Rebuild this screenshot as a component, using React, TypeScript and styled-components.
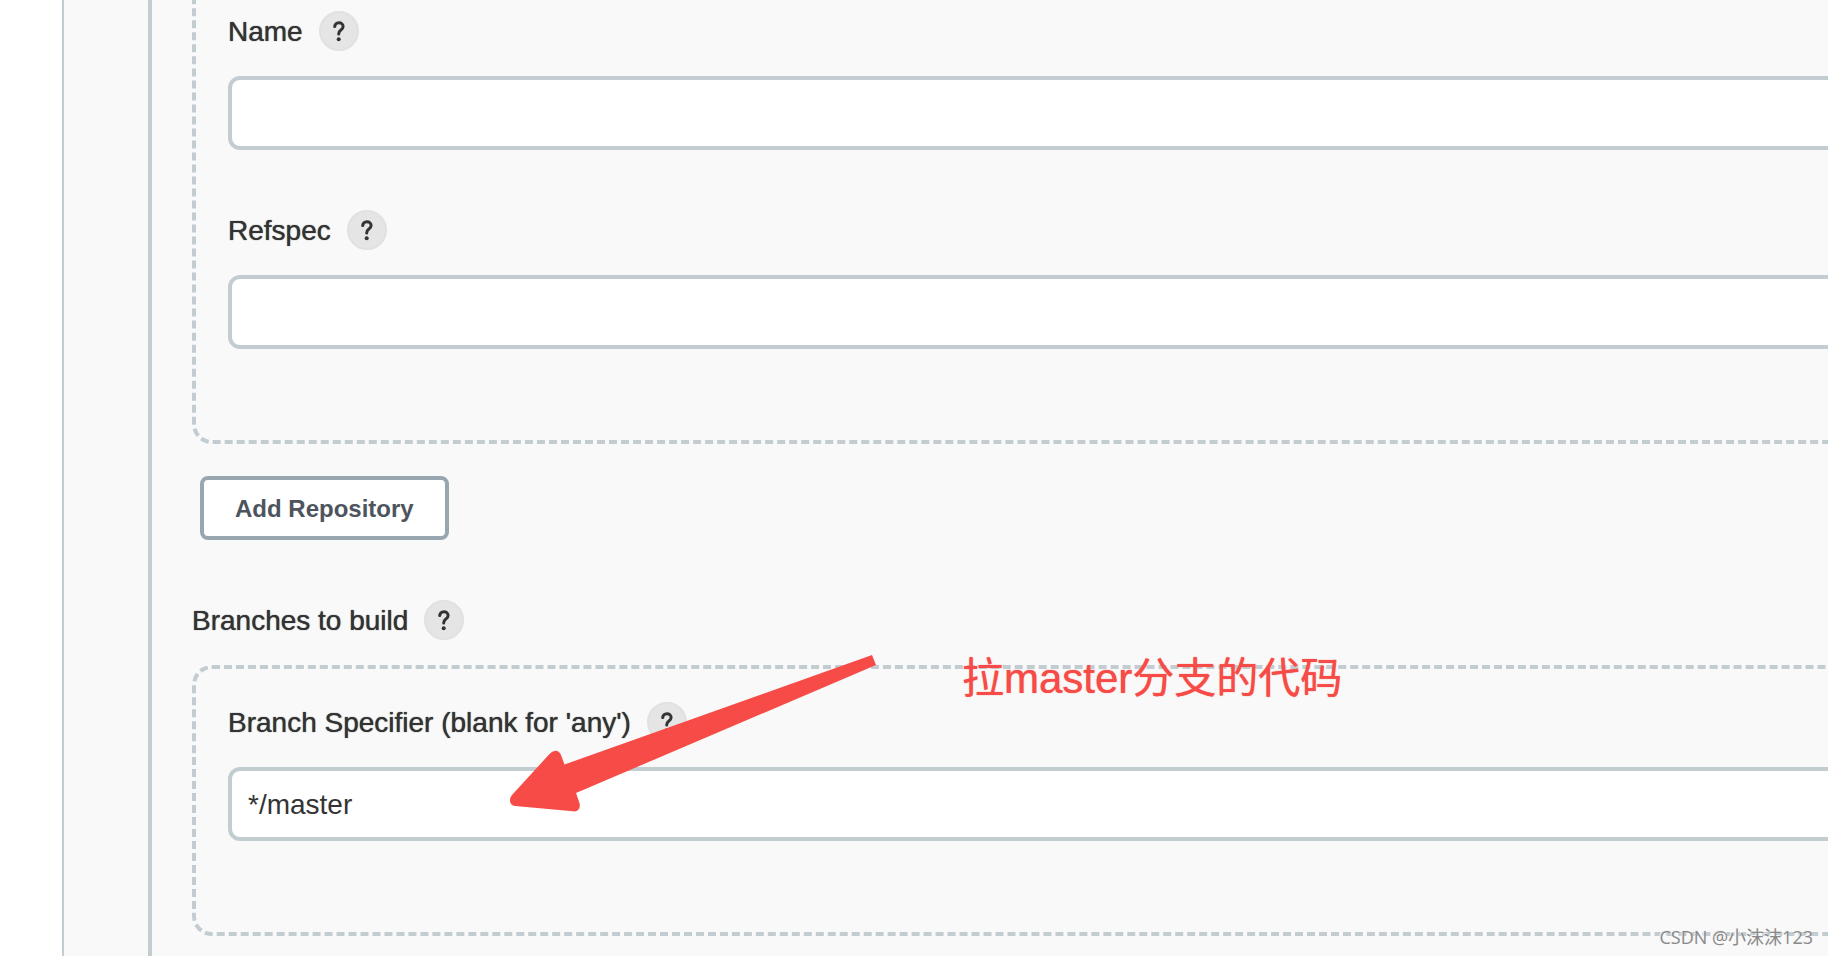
import React, { useId } from "react";
import styled, { createGlobalStyle } from "styled-components";

const line = "#c3ccd1";
const ink = "#333333";
const red = "#f74b47";

const GlobalStyle = createGlobalStyle`
  *, *::before, *::after { box-sizing: border-box; }
  body {
    margin: 0;
    background: #ffffff;
    color: ${ink};
    font-family: "Liberation Sans", "Noto Sans CJK SC", sans-serif;
    font-size: 28px;
  }
`;

const Page = styled.div`
  position: relative;
  min-height: 100vh;
  display: flex;
  padding-left: 62px;
  overflow: hidden;
`;

const Panel = styled.main`
  flex: 1;
  min-width: 0;
  display: flex;
  padding-left: 84px;
  border-left: 2px solid ${line};
  background: #f9f9f9;
`;

const Section = styled.form`
  flex: 1;
  min-width: 0;
  padding-left: 40px;
  border-left: 4px solid ${line};
`;

const RepeatedChunk = styled.section<{ $continued?: boolean }>`
  margin-right: -40px;
  margin-top: ${(p) => (p.$continued ? "-24px" : "25px")};
  padding: ${(p) => (p.$continued ? "31px" : "33px")} 0 31px 32px;
  border: 4px dashed ${line};
  border-radius: 20px;
`;

const Field = styled.div`
  display: flex;
  flex-direction: column;
  gap: 25px;
  margin-bottom: 60px;
`;

const LabelRow = styled.div`
  display: flex;
  align-items: center;
  gap: 16px;
  height: 40px;
`;

const labelText = `
  padding-top: 2px;
  line-height: 40px;
  white-space: nowrap;
  text-shadow: 0 0 1px ${ink};
`;

const Label = styled.label`
  ${labelText}
`;

const Heading = styled.span`
  ${labelText}
`;

const HelpButton = styled.button`
  display: flex;
  width: 40px;
  height: 40px;
  padding: 0;
  border: 2px solid #e1e1e1;
  border-radius: 50%;
  background: #e5e5e5;
  color: ${ink};
`;

const TextInput = styled.input`
  width: 100%;
  height: 74px;
  padding: 2px 16px 0;
  border: 4px solid ${line};
  border-radius: 12px;
  background: #ffffff;
  color: ${ink};
  font: inherit;
`;

const AddButton = styled.button`
  display: block;
  height: 64px;
  margin: 32px 0 60px 8px;
  padding: 2px 31px 0;
  border: 4px solid #98a6af;
  border-radius: 8px;
  background: #ffffff;
  color: #4d545d;
  font: bold 24px "Liberation Sans", sans-serif;
`;

const Arrow = styled.svg`
  position: absolute;
  left: 510px;
  top: 655px;
  width: 366px;
  height: 157px;
  pointer-events: none;
`;

const Note = styled.p`
  position: absolute;
  left: 962px;
  top: 653px;
  margin: 0;
  color: ${red};
  font-size: 42px;
  line-height: 52px;
  text-shadow: 0 0 1px ${red};
  white-space: nowrap;
`;

const Watermark = styled.p`
  position: absolute;
  right: 15px;
  bottom: 7px;
  margin: 0;
  color: #8a8a8a;
  font: 18px/24px "Open Sans", "Noto Sans CJK SC", sans-serif;
  text-shadow: -1px -1px 0 #f4f4f4;
  white-space: nowrap;
`;

function Help({ topic }: { topic: string }) {
  return (
    <HelpButton type="button" aria-label={`Help for feature: ${topic}`}>
      <svg width="36" height="36" viewBox="2 2 36 36" aria-hidden="true">
        <path
          d="M15.7 15.6c.1-2.2 1.8-3.9 4.200-3.900s4.200 1.600 4.200 3.800c0 1.700-.9 2.600-2.200 3.500-1.400 1-2.200 1.800-2.200 3.900"
          fill="none"
          stroke="currentColor"
          strokeWidth="3"
          strokeLinecap="round"
        />
        <circle cx="19.7" cy="28.2" r="2" fill="currentColor" />
      </svg>
    </HelpButton>
  );
}

function TextField({ label, value = "" }: { label: string; value?: string }) {
  const id = useId();
  return (
    <Field>
      <LabelRow>
        <Label htmlFor={id}>{label}</Label>
        <Help topic={label} />
      </LabelRow>
      <TextInput id={id} type="text" defaultValue={value} />
    </Field>
  );
}

export default function App() {
  return (
    <>
      <GlobalStyle />
      <Page>
        <Panel>
          <Section>
            <RepeatedChunk $continued>
              <TextField label="Name" />
              <TextField label="Refspec" />
            </RepeatedChunk>
            <AddButton type="button">Add Repository</AddButton>
            <LabelRow>
              <Heading>Branches to build</Heading>
              <Help topic="Branches to build" />
            </LabelRow>
            <RepeatedChunk>
              <TextField label="Branch Specifier (blank for 'any')" value="*/master" />
            </RepeatedChunk>
          </Section>
        </Panel>
        <Arrow viewBox="510 655 366 157" aria-hidden="true">
          <path
            d="M872 655 L876 665 L576 793 L579.5 803 Q580.5 807 578.5 809.5 Q576.5 812 573 811.3 L515 806 Q511 805.5 510 801.5 Q509.5 798 512 795 L549.5 754 Q552 751 555.5 750.8 Q559.5 751 561 755 L564.5 764.5 Z"
            fill={red}
          />
        </Arrow>
        <Note>拉master分支的代码</Note>
        <Watermark>CSDN @小沫沫123</Watermark>
      </Page>
    </>
  );
}
